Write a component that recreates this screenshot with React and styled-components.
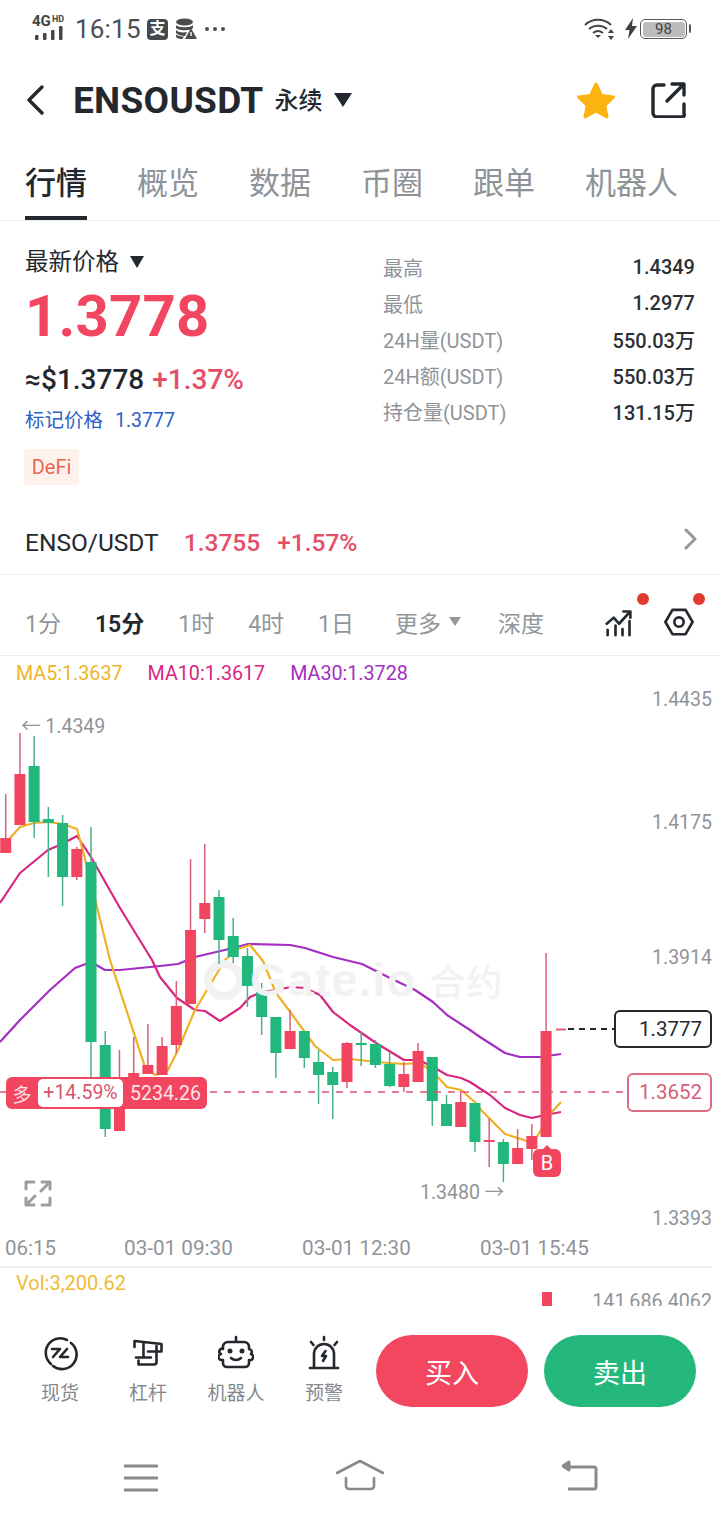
import styled, { createGlobalStyle } from "styled-components"

const FONT = `Roboto, "Noto Sans CJK SC", sans-serif`
const RED = "#f2455f"
const GREEN = "#22b77c"
const DARK = "#23282e"
const GREY = "#8f9499"

const GlobalStyle = createGlobalStyle`
  html, body {
    margin: 0;
    padding: 0;
    background: #fff;
  }
  * {
    box-sizing: border-box;
  }
  body {
    font-family: ${FONT};
    color: ${DARK};
  }
`

const Page = styled.div`
  width: 720px;
  height: 1520px;
  overflow: hidden;
  background: #fff;
  display: flex;
  flex-direction: column;
`

const StatusBar = styled.div`
  height: 56px;
  display: flex;
  align-items: center;
  padding: 2px 33px 0 32px;
  color: #4d4f52;
`

const SignalWrap = styled.div`
  position: relative;
  width: 32px;
  height: 26px;
  margin-top: -2px;
`

const NetText = styled.span`
  position: absolute;
  font-size: ${(p) => p.$size}px;
  font-weight: 700;
  line-height: 16px;
  left: ${(p) => p.$left}px;
  top: ${(p) => p.$top}px;
  color: #444;
`

const Clock = styled.span`
  font-size: 26px;
  margin-left: 11px;
  width: 64px;
  letter-spacing: 0.2px;
`

const PayBadge = styled.span`
  width: 21px;
  height: 21px;
  margin-left: 8px;
  border-radius: 4px;
  background: #47494c;
  color: #fff;
  font-size: 16px;
  font-weight: 700;
  display: flex;
  align-items: center;
  justify-content: center;
  line-height: 1;
`

const StatusIcon = styled.svg`
  margin-left: ${(p) => p.$gap || 0}px;
`

const Spacer = styled.div`
  flex: 1;
`

const BatteryBox = styled.div`
  position: relative;
  width: 47px;
  height: 20px;
  margin-left: 3px;
  border: 1.5px solid #555;
  border-radius: 5px;
  padding: 1.5px;
  &::after {
    content: "";
    position: absolute;
    right: -5px;
    top: 4px;
    width: 2px;
    height: 9px;
    border-radius: 0 2px 2px 0;
    background: #555;
  }
`

const BatteryFill = styled.div`
  height: 100%;
  border-radius: 3px;
  background: #bcbcbc;
  color: #444;
  font-size: 15px;
  line-height: 14px;
  text-align: center;
`

const Header = styled.div`
  height: 88px;
  display: flex;
  align-items: center;
  padding: 0 34px 0 26px;
`

const Symbol = styled.span`
  font-size: 37px;
  font-weight: 700;
  margin-left: 29px;
  letter-spacing: 0.3px;
  color: ${DARK};
`

const SymbolTag = styled.span`
  font-size: 24px;
  font-weight: 500;
  margin-left: 11px;
  margin-top: -4px;
`

const Caret = styled.i`
  display: inline-block;
  width: 0;
  height: 0;
  border-left: ${(p) => p.$size}px solid transparent;
  border-right: ${(p) => p.$size}px solid transparent;
  border-top: ${(p) => p.$size * 1.6}px solid ${(p) => p.$color || DARK};
  margin-left: ${(p) => p.$gap}px;
`

const StarIcon = styled.svg`
  width: 40px;
  height: 38px;
  margin-right: 35px;
`

const Tabs = styled.div`
  height: 77px;
  display: flex;
  gap: 50px;
  padding-left: 25px;
  border-bottom: 1px solid #ececec;
`

const Tab = styled.div`
  height: 76px;
  padding-top: 14px;
  font-size: 31px;
  line-height: 52px;
  font-weight: ${(p) => (p.$active ? 500 : 400)};
  color: ${(p) => (p.$active ? DARK : "#8e9398")};
  border-bottom: 4px solid ${(p) => (p.$active ? DARK : "transparent")};
`

const Summary = styled.div`
  height: 289px;
  display: grid;
  grid-template-columns: 359px 311px;
  padding-left: 25px;
`

const PriceCol = styled.div`
  display: flex;
  flex-direction: column;
  align-items: flex-start;
  padding-top: 24px;
`

const PriceLabel = styled.div`
  font-size: 23.5px;
  line-height: 34px;
  display: flex;
  align-items: center;
`

const Price = styled.div`
  margin: 5px 0 0 0;
  font-size: 58px;
  line-height: 64px;
  font-weight: 700;
  letter-spacing: 0.2px;
  color: ${RED};
`

const UsdRow = styled.div`
  margin-top: 14px;
  font-size: 28px;
  line-height: 36px;
  font-weight: 500;
  display: flex;
  gap: 8px;
`

const Change = styled.span`
  color: #e64d68;
`

const MarkRow = styled.div`
  margin-top: 9px;
  font-size: 19.5px;
  line-height: 28px;
  color: #2d60c6;
  display: flex;
  gap: 12px;
`

const CategoryTag = styled.div`
  margin-top: 14px;
  margin-left: -1px;
  width: 55px;
  height: 36px;
  border-radius: 4px;
  background: #fef1ec;
  color: #e5674f;
  font-size: 20px;
  line-height: 36px;
  text-align: center;
`

const StatsCol = styled.div`
  padding-top: 28px;
  margin-left: -1px;
`

const StatRow = styled.div`
  height: 36px;
  display: flex;
  justify-content: space-between;
  align-items: center;
  font-size: 20px;
`

const StatLabel = styled.span`
  color: ${GREY};
`

const StatValue = styled.span`
  font-weight: 500;
  color: #2b3036;
`

const PairRow = styled.div`
  height: 65px;
  display: flex;
  align-items: center;
  padding: 0 21px 0 25px;
  border-bottom: 1px solid #ececec;
  font-size: 24.5px;
`

const PairValue = styled.span`
  color: #e64d68;
  font-weight: 500;
  margin-left: ${(p) => p.$gap}px;
`

const Chevron = styled.svg`
  margin-left: auto;
  margin-top: -6px;
  width: 16px;
  height: 22px;
`

const Intervals = styled.div`
  height: 81px;
  display: flex;
  align-items: center;
  gap: 34px;
  padding: 13px 0 0 25px;
  border-bottom: 1px solid #ececec;
`

const Interval = styled.span`
  flex-shrink: 0;
  white-space: nowrap;
  font-size: 23px;
  display: flex;
  align-items: center;
  margin-left: ${(p) => p.$gap || 0}px;
  font-weight: ${(p) => (p.$active ? 600 : 400)};
  color: ${(p) => (p.$active ? DARK : "#91969b")};
`

const ToolIcons = styled.div`
  margin: 3px 0 0 27px;
  display: flex;
  gap: 28px;
  align-items: center;
  flex-shrink: 0;
`

const ToolIcon = styled.div`
  position: relative;
  width: 31px;
  height: 32px;
  &::after {
    content: "";
    position: absolute;
    left: ${(p) => p.$dotX}px;
    top: -14px;
    width: 12px;
    height: 12px;
    border-radius: 50%;
    background: #e23a2e;
  }
`

const Chart = styled.div`
  position: relative;
  height: 650px;
  overflow: hidden;
`

const ChartCanvas = styled.svg`
  display: block;
  width: 720px;
  height: 650px;
`

const Legend = styled.div`
  position: absolute;
  left: 16px;
  top: 5px;
  display: flex;
  gap: 25px;
  font-size: 19.7px;
  line-height: 26px;
`

const LegendItem = styled.span`
  color: ${(p) => p.$color};
`

const ChartText = styled.span`
  position: absolute;
  top: ${(p) => p.$y - 656}px;
  ${(p) => (p.$right !== undefined ? `right: ${720 - p.$right}px;` : `left: ${p.$x}px;`)}
  font-size: ${(p) => p.$size || 19.5}px;
  line-height: 24px;
  white-space: nowrap;
  color: ${(p) => p.$color || GREY};
`

const Watermark = styled.div`
  position: absolute;
  left: 204px;
  top: 300px;
  display: flex;
  align-items: center;
  color: #f2f2f2;
  font-family: "Liberation Sans", "Noto Sans CJK SC", sans-serif;
  font-weight: 700;
  font-size: 47px;
  letter-spacing: 1px;
  line-height: 48px;
  white-space: nowrap;
`

const WatermarkName = styled.span`
  margin-left: 46px;
`

const WatermarkCn = styled.span`
  font-size: 36px;
  margin-left: 13px;
  font-family: "Noto Sans CJK SC", sans-serif;
  font-weight: 500;
`

const PositionTag = styled.div`
  position: absolute;
  left: 6px;
  top: 421px;
  width: 201px;
  height: 32px;
  padding: 2px 0;
  border-radius: 6px;
  background: ${RED};
  color: #fde4e8;
  display: flex;
  align-items: center;
  font-size: 20px;
`

const PositionSide = styled.span`
  width: 32px;
  text-align: center;
  font-size: 19px;
`

const PositionRate = styled.span`
  width: 85px;
  height: 28px;
  border-radius: 5px;
  background: #fff;
  color: #d9546d;
  line-height: 28px;
  text-align: center;
  font-size: 19.5px;
`

const PositionSize = styled.span`
  margin-left: 7px;
  font-size: 19.5px;
`

const PriceBox = styled.div`
  position: absolute;
  right: 8px;
  top: ${(p) => p.$top}px;
  width: ${(p) => p.$width}px;
  height: ${(p) => p.$height}px;
  border: ${(p) => p.$border};
  border-radius: 6px;
  background: #fff;
  color: ${(p) => p.$color};
  font-size: 20.5px;
  line-height: ${(p) => p.$height - 4}px;
  text-align: right;
  padding-right: 8px;
`

const BuyMark = styled.div`
  position: absolute;
  left: 533px;
  top: 493px;
  width: 28px;
  height: 28px;
  border-radius: 6px;
  background: ${RED};
  color: #fff;
  font-size: 20px;
  line-height: 28px;
  text-align: center;
  &::before {
    content: "";
    position: absolute;
    left: 9px;
    top: -4px;
    border-left: 5px solid transparent;
    border-right: 5px solid transparent;
    border-bottom: 5px solid ${RED};
  }
`

const ExpandIcon = styled.svg`
  position: absolute;
  left: 24px;
  top: 524px;
  width: 28px;
  height: 27px;
`

const BottomBar = styled.div`
  height: 124px;
  display: flex;
  align-items: flex-start;
  padding: 29px 24px 0 16px;
`

const ActionList = styled.div`
  display: flex;
  width: 360px;
`

const Action = styled.div`
  width: 88px;
  display: flex;
  flex-direction: column;
  align-items: center;
  font-size: 19px;
  color: #85898e;
`

const ActionIcon = styled.svg`
  width: 36px;
  height: 36px;
  margin-bottom: 7px;
`

const TradeButton = styled.button`
  width: 152px;
  height: 72px;
  border: 0;
  border-radius: 36px;
  margin-left: ${(p) => p.$gap || 0}px;
  background: ${(p) => p.$color};
  color: #fff;
  font-family: ${FONT};
  font-size: 27px;
  font-weight: 400;
`

const NavBar = styled.div`
  flex: 1;
  display: flex;
  align-items: flex-start;
  padding: 28px 0 0 124px;
  gap: 178px;
`

const NavIcon = styled.svg`
  width: ${(p) => p.$w}px;
  height: 34px;
`

const candles = [
  [794, 853, 838, 853, 1],
  [733, 825, 774, 825, 1],
  [736, 838, 766, 822, 0],
  [807, 877, 819, 823, 0],
  [815, 906, 823, 877, 0],
  [847, 880, 849, 877, 1],
  [827, 1077, 862, 1042, 0],
  [1031, 1137, 1045, 1129, 0],
  [1050, 1131, 1080, 1131, 1],
  [1037, 1100, 1073, 1100, 1],
  [1024, 1074, 1065, 1074, 1],
  [1037, 1075, 1046, 1075, 1],
  [981, 1053, 1006, 1045, 1],
  [859, 1004, 930, 1004, 1],
  [844, 933, 903, 919, 1],
  [890, 964, 897, 940, 0],
  [918, 963, 936, 957, 0],
  [948, 1007, 956, 986, 0],
  [983, 1035, 992, 1017, 0],
  [1017, 1078, 1017, 1053, 0],
  [1010, 1049, 1031, 1049, 1],
  [1031, 1068, 1031, 1058, 0],
  [1050, 1104, 1062, 1075, 0],
  [1067, 1119, 1072, 1085, 0],
  [1042, 1088, 1043, 1082, 1],
  [1032, 1066, 1043, 1045, 0],
  [1040, 1068, 1044, 1065, 0],
  [1052, 1087, 1064, 1086, 0],
  [1062, 1092, 1074, 1087, 1],
  [1043, 1082, 1051, 1082, 1],
  [1057, 1126, 1057, 1101, 0],
  [1095, 1126, 1104, 1126, 0],
  [1091, 1127, 1102, 1127, 1],
  [1103, 1152, 1103, 1142, 0],
  [1118, 1167, 1140, 1142, 1],
  [1139, 1182, 1142, 1164, 0],
  [1129, 1164, 1148, 1164, 1],
  [1124, 1160, 1136, 1149, 1],
  [953, 1137, 1031, 1137, 1],
]

const ma5 = "M10 838L20 827L34 823L48 822L63 824L77 829L84 855L97 907L110 960L145 1067L155 1075L168 1070L178 1050L195 1010L225 960L238 949L250 945L263 961L276 993L291 1013L315 1046L333 1060L350 1059L376 1062L404 1064L420 1063L433 1072L447 1087L461 1090L476 1103L481 1110L505 1134L533 1143L541 1130L551 1113L561 1102"
const ma10 = "M0 903L20 873L48 850L62 844L77 836L91 857L108 887L120 908L152 960L160 977L177 998L195 1010L205 1011L220 1021L240 1008L250 997L262 992L276 990L291 987L305 988L320 995L333 1012L350 1025L376 1043L404 1060L419 1060L435 1068L447 1075L461 1078L470 1082L490 1095L505 1108L520 1115L532 1118L545 1115L561 1112"
const ma30 = "M0 1042L20 1020L50 990L75 968L91 962L105 970L120 970L160 966L178 964L195 957L233 948L248 944L290 945L305 948L333 957L362 964L390 978L415 990L433 1002L447 1015L470 1030L480 1037L505 1053L520 1057L540 1057L561 1054"

const tabs = ["行情", "概览", "数据", "币圈", "跟单", "机器人"]

const stats = [
  ["最高", "1.4349"],
  ["最低", "1.2977"],
  ["24H量(USDT)", "550.03万"],
  ["24H额(USDT)", "550.03万"],
  ["持仓量(USDT)", "131.15万"],
]

const Candle = ({ data, index }) => {
  const [high, low, top, bottom, up] = data
  const x = 5.7 + 14.22 * index
  const color = up ? RED : GREEN
  return (
    <g>
      <line x1={x} x2={x} y1={high} y2={low} stroke={up ? "#dc5f79" : "#45b288"} strokeWidth="1.5" />
      <rect x={x - 5.5} y={top} width="11" height={Math.max(bottom - top, 2)} fill={color} />
    </g>
  )
}

const App = () => {
  return (
    <Page>
      <GlobalStyle />
      <StatusBar>
        <SignalWrap>
          <NetText $size={15} $left={0} $top={-2}>4G</NetText>
          <NetText $size={9} $left={20} $top={-4}>HD</NetText>
          <svg width="32" height="26" viewBox="0 0 32 26">
            <g fill="#444">
              <rect x="3" y="20" width="3.5" height="5" rx="1" />
              <rect x="11" y="18" width="3.5" height="7" rx="1" />
              <rect x="19" y="15" width="3.5" height="10" rx="1" />
              <rect x="27" y="11" width="3.5" height="14" rx="1" />
            </g>
          </svg>
        </SignalWrap>
        <Clock>16:15</Clock>
        <PayBadge>支</PayBadge>
        <StatusIcon $gap={7} width="22" height="22" viewBox="0 0 22 22">
          <g fill="#4a4c4f">
            <ellipse cx="9.5" cy="4" rx="8.5" ry="3.5" />
            <path d="M1 7c2 3 15 3 17 0v3c-2 3-15 3-17 0z" />
            <path d="M1 12c2 2.500 8 3 11 2l-2 4c-4 0-7-1-9-3z" />
            <path d="M1 16.500c2 1.500 5 2 8 2l-1.500 2.500c-3 0-5-.5-6.500-2z" />
            <path d="M16 10l6 11h-12z" />
          </g>
          <rect x="15.300" y="14" width="1.400" height="4" fill="#fff" />
        </StatusIcon>
        <StatusIcon $gap={7} width="22" height="6" viewBox="0 0 22 6">
          <g fill="#4d4f52">
            <circle cx="3" cy="3" r="2" />
            <circle cx="11" cy="3" r="2" />
            <circle cx="19" cy="3" r="2" />
          </g>
        </StatusIcon>
        <Spacer />
        <svg width="32" height="24" viewBox="0 0 32 24" fill="none" stroke="#444" strokeWidth="2">
          <path d="M1 8c7-7 19-7 26 0" />
          <path d="M5 12c5-4.500 13-4.500 18 0" />
          <path d="M9 16c3-2.500 7-2.500 10 0" />
          <path d="M11 18h6l-3 3z" fill="#444" stroke="none" />
          <path d="M27 12l3 4h-6zM27 23l3-4h-6z" fill="#444" stroke="none" />
        </svg>
        <StatusIcon $gap={9} width="12" height="22" viewBox="0 0 12 22">
          <path d="M8 0L0 12h4.500L3 21l9-13H7z" fill="#3f4144" />
        </StatusIcon>
        <BatteryBox>
          <BatteryFill>98</BatteryFill>
        </BatteryBox>
      </StatusBar>

      <Header>
        <svg width="18" height="30" viewBox="0 0 18 30" fill="none" stroke={DARK} strokeWidth="3.4" strokeLinecap="round" strokeLinejoin="round">
          <path d="M16 2L3 15l13 13" />
        </svg>
        <Symbol>ENSOUSDT</Symbol>
        <SymbolTag>永续</SymbolTag>
        <Caret $size={9} $gap={11} />
        <Spacer />
        <StarIcon viewBox="0 0 40 38">
          <path d="M20 3l5.500 11.500 12 1.500-8.700 8.300 2.200 11.700-11-6-11 6 2.200-11.700L2.500 16l12-1.500z" fill="#fbb40f" stroke="#fbb40f" strokeWidth="3" strokeLinejoin="round" />
        </StarIcon>
        <svg width="35" height="36" viewBox="0 0 35 36" fill="none" stroke={DARK} strokeWidth="3.4" strokeLinecap="round" strokeLinejoin="round">
          <path d="M13 3H6a4 4 0 0 0-4 4v24a4 4 0 0 0 4 4h25a2 2 0 0 0 2-3v-10" />
          <path d="M16 19L32 3M21 2h12v11" />
        </svg>
      </Header>

      <Tabs>
        {tabs.map((tab, i) => (
          <Tab key={tab} $active={i === 0}>{tab}</Tab>
        ))}
      </Tabs>

      <Summary>
        <PriceCol>
          <PriceLabel>
            最新价格
            <Caret $size={7.5} $gap={11} />
          </PriceLabel>
          <Price>1.3778</Price>
          <UsdRow>
            <span>≈$1.3778</span>
            <Change>+1.37%</Change>
          </UsdRow>
          <MarkRow>
            <span>标记价格</span>
            <span>1.3777</span>
          </MarkRow>
          <CategoryTag>DeFi</CategoryTag>
        </PriceCol>
        <StatsCol>
          {stats.map(([label, value]) => (
            <StatRow key={label}>
              <StatLabel>{label}</StatLabel>
              <StatValue>{value}</StatValue>
            </StatRow>
          ))}
        </StatsCol>
      </Summary>

      <PairRow>
        <span>ENSO/USDT</span>
        <PairValue $gap={25}>1.3755</PairValue>
        <PairValue $gap={17}>+1.57%</PairValue>
        <Chevron viewBox="0 0 16 22" fill="none" stroke="#94989c" strokeWidth="3" strokeLinecap="round" strokeLinejoin="round">
          <path d="M3 2l9 9-9 9" />
        </Chevron>
      </PairRow>

      <Intervals>
        <Interval>1分</Interval>
        <Interval $active>15分</Interval>
        <Interval>1时</Interval>
        <Interval>4时</Interval>
        <Interval>1日</Interval>
        <Interval $gap={7}>
          更多
          <Caret $size={6} $gap={8} $color="#91969b" />
        </Interval>
        <Interval $gap={3}>深度</Interval>
        <ToolIcons>
          <ToolIcon $dotX={32}>
            <svg width="28" height="30" viewBox="0 0 32 32" fill="none" stroke={DARK} strokeWidth="3" strokeLinecap="round" strokeLinejoin="round">
              <path d="M2 18l8-7 6 7 12-13" />
              <path d="M21 4h8v7" />
              <path d="M3 25v6M12 20v11M20 24v7M28 15v16" />
            </svg>
          </ToolIcon>
          <ToolIcon $dotX={29}>
            <svg width="30" height="30" viewBox="0 0 32 32" fill="none" stroke={DARK} strokeWidth="2.800" strokeLinejoin="round">
              <path d="M9 3h14l7.500 13L23 29H9L1.500 16z" />
              <circle cx="16" cy="16" r="5" />
            </svg>
          </ToolIcon>
        </ToolIcons>
      </Intervals>

      <Chart>
        <ChartCanvas viewBox="0 656 720 650">
          <g fill="none" strokeWidth="2.200" strokeLinejoin="round">
            <path d={ma30} stroke="#a32fc0" />
            <path d={ma10} stroke="#d9267f" />
            <path d={ma5} stroke="#efb024" />
          </g>
          <circle cx="224" cy="980" r="16" fill="none" stroke="#f2f2f2" strokeWidth="8" />
          {candles.map((candle, i) => (
            <Candle key={i} data={candle} index={i} />
          ))}
          <line x1="0" x2="626" y1="1092" y2="1092" stroke="#d9566f" strokeWidth="1.500" strokeDasharray="7 7" />
          <line x1="556" x2="566" y1="1029.500" y2="1029.500" stroke="#dc5f79" strokeWidth="2" />
          <line x1="568" x2="614" y1="1029" y2="1029" stroke={DARK} strokeWidth="2" strokeDasharray="6 5" />
          <line x1="0" x2="712" y1="1267" y2="1267" stroke="#ececec" strokeWidth="1.500" />
          <rect x="542" y="1292" width="10" height="14" fill={RED} />
        </ChartCanvas>

        <Watermark>
          <WatermarkName>Gate.io</WatermarkName>
          <WatermarkCn>合约</WatermarkCn>
        </Watermark>

        <Legend>
          <LegendItem $color="#eeb42a">MA5:1.3637</LegendItem>
          <LegendItem $color="#d9267f">MA10:1.3617</LegendItem>
          <LegendItem $color="#a32fc0">MA30:1.3728</LegendItem>
        </Legend>

        <ChartText $right={712} $y={688}>1.4435</ChartText>
        <ChartText $right={712} $y={811}>1.4175</ChartText>
        <ChartText $right={712} $y={946}>1.3914</ChartText>
        <ChartText $right={712} $y={1207}>1.3393</ChartText>
        <ChartText $x={21} $y={715}>← 1.4349</ChartText>
        <ChartText $x={420} $y={1181}>1.3480 →</ChartText>
        <ChartText $x={5} $y={1236} $size={20.5}>06:15</ChartText>
        <ChartText $x={124} $y={1236} $size={20.7}>03-01 09:30</ChartText>
        <ChartText $x={302} $y={1236} $size={20.7}>03-01 12:30</ChartText>
        <ChartText $x={480} $y={1236} $size={20.7}>03-01 15:45</ChartText>
        <ChartText $x={16} $y={1271} $size={20} $color="#f0bb34">Vol:3,200.62</ChartText>
        <ChartText $right={712} $y={1290} $size={19.7}>141,686.4062</ChartText>

        <PositionTag>
          <PositionSide>多</PositionSide>
          <PositionRate>+14.59%</PositionRate>
          <PositionSize>5234.26</PositionSize>
        </PositionTag>

        <PriceBox $top={354} $width={98} $height={38} $border={`2px solid ${DARK}`} $color={DARK}>1.3777</PriceBox>
        <PriceBox $top={417} $width={85} $height={39} $border="2px solid #dc6c82" $color="#d5607a">1.3652</PriceBox>

        <BuyMark>B</BuyMark>

        <ExpandIcon viewBox="0 0 28 27" fill="none" stroke="#9a9ea3" strokeWidth="3" strokeLinecap="round" strokeLinejoin="round">
          <path d="M2 9V2h8M18 2h8v7M2 18v7h8M26 18v7h-8" />
          <path d="M25 3l-8 8M3 24l8-8" />
        </ExpandIcon>
      </Chart>

      <BottomBar>
        <ActionList>
          <Action>
            <ActionIcon viewBox="0 0 36 36" fill="none" stroke={DARK} strokeWidth="2.600" strokeLinecap="round" strokeLinejoin="round">
              <path d="M25 5A14.500 14.500 0 0 0 9 29" />
              <path d="M11 31A14.500 14.500 0 0 0 29 8" />
              <path d="M10 14h8l-7 8M26 22h-8l7-8" />
            </ActionIcon>
            现货
          </Action>
          <Action>
            <ActionIcon viewBox="0 0 36 36" fill="none" stroke={DARK} strokeWidth="2.600" strokeLinecap="round" strokeLinejoin="round">
              <path d="M4.500 6l27 3M4.500 6v6M13.500 7v15.500M6 22.500h15M26.500 9v18a2.500 2.500 0 0 1-2.500 2.500H8.500v-4M18 16.500h13.500M31.500 9v7" />
            </ActionIcon>
            杠杆
          </Action>
          <Action>
            <ActionIcon viewBox="0 0 36 36" fill="none" stroke={DARK} strokeWidth="2.600" strokeLinecap="round" strokeLinejoin="round">
              <path d="M18 2v5M10 32H9a4 4 0 0 1-4-4v-3H4a2 2 0 0 1-1-6 2 2 0 0 1 2-5v-2a5 5 0 0 1 5-5h16a5 5 0 0 1 5 5v2a3 3 0 0 1 2 5 3 3 0 0 1-2 6v3a4 4 0 0 1-4 4H10" />
              <path d="M13 23c3 2.500 7 2.500 10 0" />
              <circle cx="12" cy="16" r="1.200" fill={DARK} />
              <circle cx="24" cy="16" r="1.200" fill={DARK} />
            </ActionIcon>
            机器人
          </Action>
          <Action>
            <ActionIcon viewBox="0 0 36 36" fill="none" stroke={DARK} strokeWidth="2.600" strokeLinecap="round" strokeLinejoin="round">
              <path d="M8 32V19a10 10 0 0 1 20 0v13" />
              <path d="M4 33h28M18 2v3M5 7l2.500 3M31 7l-2.500 3" />
              <path d="M19.500 16l-3.500 5h4l-3 5" />
            </ActionIcon>
            预警
          </Action>
        </ActionList>
        <TradeButton $color="#f2475f">买入</TradeButton>
        <TradeButton $color="#25b87d" $gap={16}>卖出</TradeButton>
      </BottomBar>

      <NavBar>
        <NavIcon $w={34} viewBox="0 0 34 34" fill="none" stroke="#8a8a8a" strokeWidth="3" strokeLinecap="round">
          <path d="M1 8h32M1 20h32M1 32h32" />
        </NavIcon>
        <NavIcon $w={48} viewBox="0 0 48 34" fill="none" stroke="#8a8a8a" strokeWidth="2.600" strokeLinecap="round" strokeLinejoin="round">
          <path d="M1 15L24 3l23 12" />
          <path d="M10 20v8a3 3 0 0 0 3 3h22a3 3 0 0 0 3-3v-8" />
        </NavIcon>
        <NavIcon $w={36} viewBox="0 0 36 34" fill="none" stroke="#8a8a8a" strokeWidth="3" strokeLinejoin="round">
          <path d="M6 9h26a2 2 0 0 1 2 2v18a2 2 0 0 1-2 2H6" />
          <path d="M7 4L1 8l6 4z" fill="#8a8a8a" />
        </NavIcon>
      </NavBar>
    </Page>
  )
}

export default App
